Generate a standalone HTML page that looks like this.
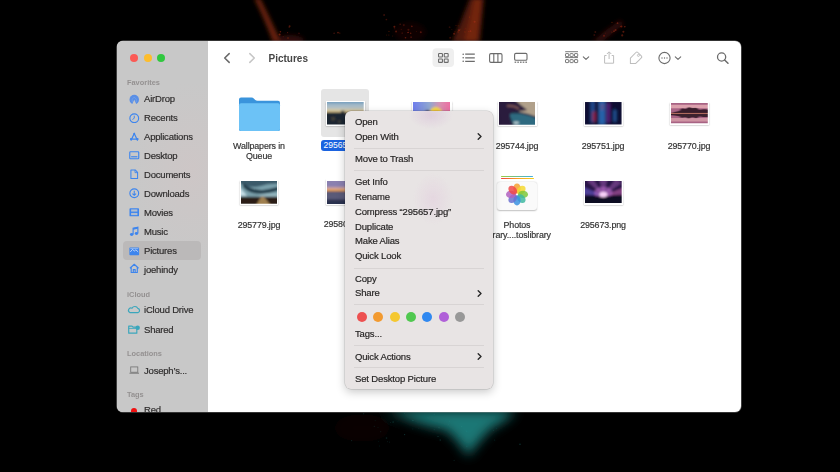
<!DOCTYPE html>
<html><head><meta charset="utf-8">
<style>
*{box-sizing:border-box;margin:0;padding:0}
html,body{width:840px;height:472px;overflow:hidden;background:#000}
.lbl,.si,.mi,.sh{will-change:transform;-webkit-text-stroke:0.18px currentColor}
.sh{-webkit-text-stroke:0}
body{position:relative;font-family:"Liberation Sans",sans-serif;color:#2b2b2b}
.abs{position:absolute}
#win{position:absolute;left:117px;top:41px;width:624px;height:371px;border-radius:6px;overflow:hidden;background:#fff;box-shadow:0 0 0 0.6px rgba(190,190,190,0.55)}
#side{position:absolute;left:0;top:0;width:91px;height:371px;background:radial-gradient(ellipse 60px 90px at 75px 130px,rgba(215,195,195,0.35),rgba(215,195,195,0) 100%),#c8c8c8}
.dot{position:absolute;width:8px;height:8px;border-radius:50%}
.sh{position:absolute;left:10px;font-size:7.4px;font-weight:700;color:#949191;white-space:nowrap}
.si{position:absolute;left:27px;margin-top:0.3px;font-size:9.5px;letter-spacing:-0.2px;color:#2e2c2c;white-space:nowrap}
.ic{position:absolute;left:12px}
.lbl{position:absolute;font-size:8.6px;color:#333;white-space:nowrap;text-align:center;line-height:10.5px}
.th{position:absolute;background:#fff;box-shadow:0 0.5px 1.5px rgba(0,0,0,.35)}
.th i{position:absolute;left:2px;top:2px;right:2px;bottom:2px;display:block}
#menu{position:absolute;left:345px;top:110.5px;width:147.5px;height:278.5px;border-radius:6px;background:radial-gradient(ellipse 22px 14px at 86px 4px,rgba(215,190,215,0.55),rgba(215,190,215,0)),radial-gradient(ellipse 20px 26px at 88px 88px,rgba(225,200,220,0.45),rgba(225,200,220,0)),#e8e4e4;box-shadow:0 0 0 0.5px rgba(0,0,0,.18),0 3px 10px rgba(0,0,0,.22)}
.mi{position:absolute;left:10px;margin-top:-0.4px;font-size:9.5px;letter-spacing:-0.15px;color:#262424;white-space:nowrap}
.sep{position:absolute;left:9px;right:9px;height:1px;background:#d8d4d4}
.chev{position:absolute;left:132px}
.cd{position:absolute;width:10px;height:10px;border-radius:50%;top:201px}
</style></head><body>
<!-- background glows -->
<svg class="abs" style="left:0;top:0" width="840" height="472" viewBox="0 0 840 472">
<defs>
<filter id="b3" x="-50%" y="-50%" width="200%" height="200%"><feGaussianBlur stdDeviation="2.2"/></filter>
<filter id="b6" x="-50%" y="-50%" width="200%" height="200%"><feGaussianBlur stdDeviation="6"/></filter>
<filter id="b1" x="-50%" y="-50%" width="200%" height="200%"><feGaussianBlur stdDeviation="0.6"/></filter>
</defs>
<g filter="url(#b3)">
<path d="M254 -2 Q264 18 273 42 L281 42 Q270 18 260 -2 Z" fill="#8c2c16" opacity="0.75"/>
<ellipse cx="290" cy="40" rx="14" ry="5" fill="#5a1410" opacity="0.5"/>
<path d="M470 -2 L484 -2 Q482 20 480 42 L452 42 Q462 20 470 -2 Z" fill="#6a2010" opacity="0.75"/><path d="M474 -2 L482 -2 Q480 20 477 42 L464 42 Q470 20 474 -2 Z" fill="#8c2c14" opacity="0.6"/>
<ellipse cx="410" cy="32" rx="16" ry="10" fill="#3a1208" opacity="0.25"/>
<path d="M592 42 Q605 30 620 20 L624 24 Q612 34 602 42 Z" fill="#5a1410" opacity="0.5"/>
</g>
<g filter="url(#b6)">
<path d="M386 410 L516 410 Q506 422 492 428 Q480 440 468 456 Q458 440 446 430 Q420 426 386 410 Z" fill="#1c8482" opacity="0.9"/>
<ellipse cx="362" cy="428" rx="28" ry="14" fill="#140a0c" opacity="0.35"/>
</g>
<g fill="#b0301a" filter="url(#b1)"><circle cx="402.2" cy="33.1" r="0.89" opacity="0.23"/><circle cx="394.8" cy="28.7" r="0.53" opacity="0.38"/><circle cx="416.4" cy="31.5" r="0.54" opacity="0.24"/><circle cx="386.7" cy="35.1" r="0.57" opacity="0.28"/><circle cx="386.4" cy="19.5" r="0.85" opacity="0.34"/><circle cx="408.4" cy="29.7" r="1.02" opacity="0.31"/><circle cx="408.4" cy="32.4" r="0.69" opacity="0.48"/><circle cx="411.1" cy="37.2" r="0.88" opacity="0.33"/><circle cx="401.2" cy="29.4" r="0.54" opacity="0.28"/><circle cx="400.1" cy="24.3" r="0.69" opacity="0.40"/><circle cx="396.1" cy="31.5" r="0.98" opacity="0.44"/><circle cx="405.5" cy="37.8" r="0.82" opacity="0.50"/><circle cx="403.8" cy="25.1" r="1.09" opacity="0.25"/><circle cx="388.9" cy="35.0" r="0.59" opacity="0.37"/><circle cx="420.8" cy="32.2" r="0.96" opacity="0.40"/><circle cx="411.8" cy="26.3" r="0.92" opacity="0.41"/><circle cx="394.4" cy="26.8" r="1.00" opacity="0.52"/><circle cx="389.0" cy="31.4" r="0.54" opacity="0.44"/><circle cx="384.1" cy="14.9" r="0.99" opacity="0.31"/><circle cx="392.7" cy="35.9" r="0.51" opacity="0.36"/><circle cx="407.7" cy="32.6" r="0.54" opacity="0.46"/><circle cx="410.7" cy="33.3" r="0.73" opacity="0.50"/><circle cx="470.6" cy="31.2" r="0.83" opacity="0.50"/><circle cx="469.6" cy="17.1" r="0.67" opacity="0.35"/><circle cx="450.2" cy="37.7" r="1.07" opacity="0.26"/><circle cx="464.9" cy="31.9" r="0.64" opacity="0.37"/><circle cx="456.0" cy="25.5" r="0.50" opacity="0.35"/><circle cx="454.1" cy="33.7" r="1.07" opacity="0.44"/><circle cx="449.6" cy="27.2" r="0.91" opacity="0.23"/><circle cx="474.6" cy="21.8" r="1.02" opacity="0.47"/><circle cx="454.9" cy="31.8" r="0.56" opacity="0.42"/><circle cx="465.1" cy="28.9" r="0.63" opacity="0.26"/><circle cx="460.4" cy="29.7" r="0.50" opacity="0.26"/><circle cx="468.9" cy="31.4" r="0.52" opacity="0.50"/><circle cx="458.2" cy="25.8" r="0.65" opacity="0.32"/><circle cx="459.0" cy="30.3" r="1.01" opacity="0.54"/><circle cx="451.9" cy="29.5" r="0.55" opacity="0.25"/><circle cx="458.1" cy="31.9" r="1.00" opacity="0.26"/><circle cx="299.0" cy="33.4" r="0.82" opacity="0.26"/><circle cx="280.4" cy="31.7" r="0.82" opacity="0.53"/><circle cx="289.1" cy="27.3" r="0.66" opacity="0.33"/><circle cx="288.0" cy="38.0" r="0.82" opacity="0.47"/><circle cx="279.6" cy="34.5" r="0.99" opacity="0.53"/><circle cx="289.6" cy="26.2" r="0.99" opacity="0.46"/><circle cx="283.2" cy="36.8" r="0.71" opacity="0.22"/><circle cx="287.6" cy="32.6" r="0.66" opacity="0.44"/><circle cx="621.4" cy="26.5" r="1.06" opacity="0.53"/><circle cx="620.2" cy="26.7" r="0.63" opacity="0.28"/><circle cx="614.0" cy="31.2" r="0.87" opacity="0.51"/><circle cx="617.5" cy="23.2" r="0.89" opacity="0.47"/><circle cx="623.4" cy="31.7" r="1.05" opacity="0.47"/><circle cx="612.0" cy="22.3" r="0.61" opacity="0.47"/><circle cx="604.0" cy="35.8" r="1.08" opacity="0.34"/><circle cx="594.3" cy="35.0" r="0.93" opacity="0.26"/><circle cx="615.6" cy="30.0" r="1.04" opacity="0.47"/><circle cx="622.2" cy="35.4" r="1.09" opacity="0.43"/><circle cx="605.3" cy="33.1" r="0.58" opacity="0.22"/><circle cx="624.8" cy="26.7" r="0.82" opacity="0.52"/><circle cx="595.3" cy="32.1" r="1.00" opacity="0.28"/><circle cx="611.9" cy="32.2" r="0.64" opacity="0.40"/><circle cx="339.8" cy="33.1" r="0.58" opacity="0.51"/><circle cx="338.0" cy="32.6" r="0.85" opacity="0.51"/><circle cx="334.1" cy="33.2" r="0.80" opacity="0.38"/></g>
<g fill="#2a8a88" filter="url(#b1)"><circle cx="434.2" cy="429.6" r="0.62" opacity="0.16"/><circle cx="493.7" cy="430.6" r="0.49" opacity="0.23"/><circle cx="434.1" cy="414.3" r="0.56" opacity="0.25"/><circle cx="390.6" cy="422.5" r="0.45" opacity="0.25"/><circle cx="440.2" cy="440.1" r="0.79" opacity="0.24"/><circle cx="393.1" cy="422.0" r="0.86" opacity="0.23"/><circle cx="412.9" cy="420.4" r="0.66" opacity="0.29"/><circle cx="404.6" cy="434.6" r="0.64" opacity="0.35"/><circle cx="461.7" cy="426.6" r="0.68" opacity="0.35"/><circle cx="448.7" cy="424.3" r="0.46" opacity="0.23"/><circle cx="460.0" cy="434.1" r="0.44" opacity="0.28"/><circle cx="466.9" cy="446.4" r="0.73" opacity="0.16"/><circle cx="454.1" cy="460.3" r="0.60" opacity="0.23"/><circle cx="496.6" cy="428.5" r="0.48" opacity="0.22"/><circle cx="412.8" cy="428.9" r="0.50" opacity="0.20"/><circle cx="439.0" cy="427.6" r="0.68" opacity="0.23"/><circle cx="466.8" cy="431.3" r="0.71" opacity="0.24"/><circle cx="520.0" cy="444.2" r="0.79" opacity="0.35"/><circle cx="458.6" cy="436.0" r="0.42" opacity="0.31"/><circle cx="438.0" cy="436.5" r="0.61" opacity="0.34"/><circle cx="449.7" cy="421.2" r="0.47" opacity="0.34"/><circle cx="397.9" cy="421.7" r="0.44" opacity="0.13"/><circle cx="428.0" cy="417.8" r="0.44" opacity="0.35"/><circle cx="404.2" cy="413.2" r="0.44" opacity="0.32"/><circle cx="494.6" cy="440.1" r="0.63" opacity="0.20"/><circle cx="375.2" cy="420.6" r="0.53" opacity="0.15"/><circle cx="418.2" cy="428.4" r="0.45" opacity="0.16"/><circle cx="389.6" cy="442.1" r="0.56" opacity="0.19"/><circle cx="380.7" cy="431.7" r="0.65" opacity="0.16"/><circle cx="378.4" cy="441.6" r="0.53" opacity="0.13"/><circle cx="378.0" cy="427.4" r="0.49" opacity="0.23"/><circle cx="386.5" cy="438.1" r="0.81" opacity="0.22"/><circle cx="351.6" cy="440.6" r="0.60" opacity="0.24"/><circle cx="363.7" cy="413.7" r="0.57" opacity="0.32"/><circle cx="374.3" cy="426.3" r="0.60" opacity="0.20"/><circle cx="387.5" cy="441.8" r="0.44" opacity="0.30"/><circle cx="379.7" cy="446.0" r="0.44" opacity="0.32"/></g>
</svg>


<div id="win">
  <div id="side">
    <div class="dot" style="left:13.1px;top:13.3px;background:#fb5a55"></div>
    <div class="dot" style="left:26.9px;top:13.3px;background:#fdbd2c"></div>
    <div class="dot" style="left:40.4px;top:13.3px;background:#30c83f"></div>
<div class="abs" style="left:6px;top:200px;width:78px;height:18.5px;border-radius:4px;background:#bbb9b9"></div>
<div class="si" style="top:53.0px;line-height:9.2px">AirDrop</div><svg class="ic" style="top:52.75px;left:12.1px" width="10.5" height="10.5" viewBox="0 0 11 11"><circle cx="5.5" cy="5.9" r="5" fill="#5a8fe6"/><path d="M5.5 6 L3.2 11 H7.8 Z" fill="#c8c8c8"/><path d="M3.4 8.6 Q2.2 5 5.5 3.2 Q8.8 5 7.6 8.6" fill="none" stroke="#7aa6ec" stroke-width="0.7"/></svg>
<div class="si" style="top:71.8px;line-height:9.2px">Recents</div><svg class="ic" style="top:71.55px;left:12.1px" width="10.5" height="10.5" viewBox="0 0 11 11"><circle cx="5.5" cy="5.5" r="4.6" fill="none" stroke="#3d85ee" stroke-width="1.2"/><path d="M5.5 2.8 V5.5 L3.6 6.8" fill="none" stroke="#3d85ee" stroke-width="1"/></svg>
<div class="si" style="top:90.7px;line-height:9.2px">Applications</div><svg class="ic" style="top:90.45px;left:12.1px" width="10.5" height="10.5" viewBox="0 0 11 11"><path d="M5.5 2.6 L2.2 9.6 M5.5 2.6 L8.8 9.6 M1.6 8.4 H9.4" fill="none" stroke="#3d85ee" stroke-width="1.3" stroke-linecap="round"/><circle cx="5.5" cy="2.8" r="1" fill="#3d85ee"/><circle cx="2.2" cy="8.5" r="1.1" fill="#3d85ee"/><circle cx="8.8" cy="8.5" r="1.1" fill="#3d85ee"/></svg>
<div class="si" style="top:109.4px;line-height:9.2px">Desktop</div><svg class="ic" style="top:109.15px;left:12.1px" width="10.5" height="10.5" viewBox="0 0 11 11"><rect x="0.8" y="1.8" width="9.4" height="7.4" rx="0.8" fill="none" stroke="#3d85ee" stroke-width="1.2"/><rect x="2.2" y="6.5" width="6.6" height="1.2" fill="#3d85ee"/></svg>
<div class="si" style="top:128.4px;line-height:9.2px">Documents</div><svg class="ic" style="top:128.15px;left:12.1px" width="10.5" height="10.5" viewBox="0 0 11 11"><path d="M2 1 H6.5 L9 3.5 V10 H2 Z" fill="none" stroke="#3d85ee" stroke-width="1.1" stroke-linejoin="round"/><path d="M6.3 1 V3.8 H9" fill="none" stroke="#3d85ee" stroke-width="0.9"/></svg>
<div class="si" style="top:147.4px;line-height:9.2px">Downloads</div><svg class="ic" style="top:147.15px;left:12.1px" width="10.5" height="10.5" viewBox="0 0 11 11"><circle cx="5.5" cy="5.5" r="4.6" fill="none" stroke="#3d85ee" stroke-width="1.2"/><path d="M5.5 3 V7.6 M3.6 5.8 L5.5 7.7 L7.4 5.8" fill="none" stroke="#3d85ee" stroke-width="1.1"/></svg>
<div class="si" style="top:166.4px;line-height:9.2px">Movies</div><svg class="ic" style="top:166.15px;left:12.1px" width="10.5" height="10.5" viewBox="0 0 11 11"><rect x="0.5" y="1.2" width="10" height="8.6" rx="0.9" fill="#3d85ee"/><rect x="2.2" y="2.5" width="6.6" height="2.3" fill="#c8c8c8" opacity="0.85"/><rect x="2.2" y="6.2" width="6.6" height="2.3" fill="#c8c8c8" opacity="0.85"/></svg>
<div class="si" style="top:185.4px;line-height:9.2px">Music</div><svg class="ic" style="top:185.15px;left:12.1px" width="10.5" height="10.5" viewBox="0 0 11 11"><path d="M4.3 8.8 V2.2 L9.3 1.2 V7.6" fill="none" stroke="#3d85ee" stroke-width="1.2"/><path d="M4.3 2.2 L9.3 1.2 V3 L4.3 4 Z" fill="#3d85ee"/><ellipse cx="2.8" cy="8.9" rx="1.8" ry="1.5" fill="#3d85ee"/><ellipse cx="7.8" cy="7.8" rx="1.8" ry="1.5" fill="#3d85ee"/></svg>
<div class="si" style="top:205.0px;line-height:9.2px">Pictures</div><svg class="ic" style="top:204.75px;left:12.1px" width="10.5" height="10.5" viewBox="0 0 11 11"><rect x="0.4" y="1.5" width="10.2" height="8.2" rx="0.7" fill="#3d85ee"/><path d="M1.4 6.2 L3.6 3.6 L5.6 5.2 L7.2 4 L9.6 6.2" fill="none" stroke="#dfe8f8" stroke-width="0.8"/><rect x="1.3" y="2.4" width="8.4" height="0.8" fill="#dfe8f8" opacity="0.6"/></svg>
<div class="si" style="top:224.0px;line-height:9.2px">joehindy</div><svg class="ic" style="top:222.00px;left:12.1px" width="10.5" height="10.5" viewBox="0 0 11 11"><path d="M1 5.5 L5.5 1.3 L10 5.5 M2.3 4.5 V10 H8.7 V4.5 M4.5 10 V7 H6.5 V10" fill="none" stroke="#3d85ee" stroke-width="1.2" stroke-linejoin="round"/></svg>
<div class="si" style="top:264.2px;line-height:9.2px">iCloud Drive</div><svg class="ic" style="top:263.45px;left:12.1px;overflow:visible" width="10.5" height="10.5" viewBox="0 0 11 11"><path d="M0.9 9 H9.6 A2.3 2.3 0 0 0 9.2 4.6 A3.3 3.3 0 0 0 3.2 4.4 A2.4 2.4 0 0 0 0.9 9 Z" fill="none" stroke="#3aa6bc" stroke-width="1.2" stroke-linejoin="round"/></svg>
<div class="si" style="top:283.4px;line-height:9.2px">Shared</div><svg class="ic" style="top:282.65px;left:12.1px;overflow:visible" width="10.5" height="10.5" viewBox="0 0 11 11"><path d="M-0.3 2.2 H3.2 L4.2 3.2 H8.2 V9.6 H-0.3 Z" fill="none" stroke="#3aa6bc" stroke-width="1.2" stroke-linejoin="round"/><path d="M-0.3 4.6 H8.2" stroke="#3aa6bc" stroke-width="0.9"/><circle cx="9.1" cy="3.9" r="2.3" fill="#3aa6bc"/></svg>
<div class="si" style="top:324.6px;line-height:9.2px">Joseph’s...</div><svg class="ic" style="top:323.85px;left:12.1px" width="10.5" height="10.5" viewBox="0 0 11 11"><rect x="1.8" y="2" width="7.4" height="5.6" fill="none" stroke="#777" stroke-width="0.9"/><path d="M0.5 8.6 H10.5" stroke="#777" stroke-width="1"/></svg>
<div class="sh" style="top:37.8px;line-height:7.4px">Favorites</div>
<div class="sh" style="top:249.9px;line-height:7.4px">iCloud</div>
<div class="sh" style="top:309.4px;line-height:7.4px">Locations</div>
<div class="sh" style="top:350.3px;line-height:7.4px">Tags</div>
<div class="abs" style="left:13.8px;top:366.5px;width:6.4px;height:6.4px;border-radius:50%;background:#f01010"></div><div class="si" style="top:364.2px;line-height:9.2px">Red</div>
  </div>
</div>

<svg class="abs" style="left:238px;top:96px" width="43" height="36" viewBox="0 0 43 36">
<path d="M1 3.6 Q1 1.6 3 1.6 H13.5 Q15 1.6 16 2.7 L17.3 4.1 Q18 4.8 19.5 4.8 H40 Q42 4.8 42 6.8 V33 Q42 35 40 35 H3 Q1 35 1 33 Z" fill="#3a94dc"/>
<path d="M1 9.2 Q1 7.2 3 7.2 H40 Q42 7.2 42 9.2 V33 Q42 35 40 35 H3 Q1 35 1 33 Z" fill="#6cc2f6"/>
<path d="M1 33 Q1 35 3 35 H40 Q42 35 42 33 V33.8 Q42 35 40 35 H3 Q1 35 1 33.8 Z" fill="#4aa2e0"/>
</svg>
<div class="lbl" style="left:209px;width:100px;top:141.6px;font-size:8.9px;line-height:8.9px;letter-spacing:-0.12px;color:#333">Wallpapers in</div>
<div class="lbl" style="left:209px;width:100px;top:152.2px;font-size:8.9px;line-height:8.9px;letter-spacing:-0.12px;color:#333">Queue</div>
<div class="abs" style="left:320.8px;top:89px;width:48.5px;height:48px;border-radius:3px;background:#e5e5e5"></div>
<div class="th" style="left:325.6px;top:100.6px;width:39.5px;height:25.4px"><svg style="position:absolute;left:1.4px;top:1.4px" width="36.7" height="22.6" viewBox="0 0 36 23" preserveAspectRatio="none"><defs><filter id="f327102" x="-20%" y="-20%" width="140%" height="140%"><feGaussianBlur stdDeviation="0.9"/></filter><clipPath id="c327102"><rect width="36" height="23"/></clipPath></defs><g clip-path="url(#c327102)"><g filter="url(#f327102)"><rect x="-2" y="-2" width="40" height="27" fill="#1c222c"/><rect x="-2" y="-2" width="40" height="9" fill="#7aa2c0"/><rect x="-2" y="2" width="40" height="5" fill="#a8bcc8"/><rect x="-2" y="6" width="40" height="3" fill="#c8c8b8"/><rect x="-2" y="8.5" width="40" height="2.2" fill="#dcc48a"/><path d="M-2 11 H14 V9 H17 V12 H40 V25 H-2 Z" fill="#1e2630"/><circle cx="6" cy="17" r="2" fill="#5a5040" opacity="0.6"/><circle cx="12" cy="20" r="1.5" fill="#605848" opacity="0.5"/></g></g></svg></div>
<div class="abs" style="left:321px;top:140px;width:49px;height:11px;border-radius:3px;background:#1b63e0"></div>
<div class="abs" style="left:323.5px;top:141.3px;font-size:8.6px;line-height:8.6px;color:#fff;white-space:nowrap">295657.jpg</div>
<div class="th" style="left:411.5px;top:100.5px;width:40.1px;height:25.5px"><svg style="position:absolute;left:1.4px;top:1.4px" width="37.3" height="22.7" viewBox="0 0 36 23" preserveAspectRatio="none"><defs><filter id="f412101" x="-20%" y="-20%" width="140%" height="140%"><feGaussianBlur stdDeviation="0.9"/></filter><clipPath id="c412101"><rect width="36" height="23"/></clipPath></defs><g clip-path="url(#c412101)"><g filter="url(#f412101)"><defs><linearGradient id="sg" x1="0" x2="1"><stop offset="0" stop-color="#6a78f0"/><stop offset="0.45" stop-color="#90a8d0"/><stop offset="0.7" stop-color="#d890b0"/><stop offset="1" stop-color="#f068a0"/></linearGradient></defs><rect x="-2" y="-2" width="40" height="27" fill="url(#sg)"/><circle cx="22" cy="11" r="6" fill="#f8d840"/><circle cx="22" cy="14" r="5" fill="#f0a040"/><path d="M10 12 Q13 6 17 10 L17 14 H10 Z" fill="#3a1a40"/></g></g></svg></div>
<div class="th" style="left:497.6px;top:100.5px;width:39.1px;height:25.5px"><svg style="position:absolute;left:1.4px;top:1.4px" width="36.3" height="22.7" viewBox="0 0 36 23" preserveAspectRatio="none"><defs><filter id="f499101" x="-20%" y="-20%" width="140%" height="140%"><feGaussianBlur stdDeviation="0.9"/></filter><clipPath id="c499101"><rect width="36" height="23"/></clipPath></defs><g clip-path="url(#c499101)"><g filter="url(#f499101)"><rect x="-2" y="-2" width="40" height="27" fill="#24304a"/><path d="M14 -2 H40 V16 Q30 12 20 10 Z" fill="#b0a08a"/><path d="M10 12 Q20 11 30 14 L40 18 V25 H16 Q12 18 10 12 Z" fill="#2e6a80"/><path d="M-2 -2 H16 Q22 4 28 8 Q20 9 12 11 Q8 16 14 25 H-2 Z" fill="#2a1a3c"/><path d="M8 4 Q14 3 20 7" stroke="#a07060" stroke-width="2" fill="none" opacity="0.7"/><ellipse cx="17" cy="21" rx="3" ry="1.3" fill="#e0e8e8" opacity="0.8"/></g></g></svg></div>
<div class="lbl" style="left:467px;width:100px;top:141.6px;font-size:8.9px;line-height:8.9px;letter-spacing:-0.12px;color:#333">295744.jpg</div>
<div class="th" style="left:583.6px;top:100.6px;width:39.4px;height:25.4px"><svg style="position:absolute;left:1.4px;top:1.4px" width="36.6" height="22.6" viewBox="0 0 36 23" preserveAspectRatio="none"><defs><filter id="f585102" x="-20%" y="-20%" width="140%" height="140%"><feGaussianBlur stdDeviation="1.4"/></filter><clipPath id="c585102"><rect width="36" height="23"/></clipPath></defs><g clip-path="url(#c585102)"><g filter="url(#f585102)"><rect x="-2" y="-2" width="40" height="27" fill="#0c0c32"/><rect x="5.5" y="-1" width="4" height="22" fill="#2a60b0" opacity="0.75"/><rect x="7.5" y="10" width="3" height="10" fill="#a02040" opacity="0.9"/><rect x="13.5" y="-1" width="6.5" height="24" fill="#2f78c8" opacity="0.8"/><rect x="21" y="1" width="3.5" height="20" fill="#6a2a90" opacity="0.75"/><rect x="28" y="8" width="2.5" height="12" fill="#2a6ab8" opacity="0.8"/><rect x="16" y="2" width="2" height="6" fill="#a04060" opacity="0.6"/></g></g></svg></div>
<div class="lbl" style="left:553px;width:100px;top:141.6px;font-size:8.9px;line-height:8.9px;letter-spacing:-0.12px;color:#333">295751.jpg</div>
<div class="th" style="left:669.8px;top:101.9px;width:39.6px;height:23.1px"><svg style="position:absolute;left:1.4px;top:1.4px" width="36.8" height="20.3" viewBox="0 0 36 23" preserveAspectRatio="none"><defs><filter id="f671103" x="-20%" y="-20%" width="140%" height="140%"><feGaussianBlur stdDeviation="0.8"/></filter><clipPath id="c671103"><rect width="36" height="23"/></clipPath></defs><g clip-path="url(#c671103)"><g filter="url(#f671103)"><rect x="-2" y="-2" width="40" height="27" fill="#a86484"/><rect x="-2" y="2" width="40" height="4" fill="#e8b0b8" opacity="0.8"/><rect x="-2" y="17" width="40" height="4" fill="#e0a8b0" opacity="0.7"/><path d="M-2 12 Q4 10 8 9 Q10 4 14 7 Q17 3 21 6 Q25 4 28 8 Q33 6 40 9 V12 H-2 Z" fill="#2a1420" opacity="0.9"/><rect x="-2" y="11.2" width="40" height="1.2" fill="#e08860" opacity="0.6"/><path d="M-2 12.4 H40 V15 Q33 17 28 15 Q25 19 21 16 Q17 19 14 16 Q10 18 8 15 Q4 14 -2 13.5 Z" fill="#2a1420" opacity="0.85"/></g></g></svg></div>
<div class="lbl" style="left:639px;width:100px;top:141.6px;font-size:8.9px;line-height:8.9px;letter-spacing:-0.12px;color:#333">295770.jpg</div>
<div class="th" style="left:239.6px;top:179.5px;width:38.8px;height:25.5px"><svg style="position:absolute;left:1.4px;top:1.4px" width="36.0" height="22.7" viewBox="0 0 36 23" preserveAspectRatio="none"><defs><filter id="f241180" x="-20%" y="-20%" width="140%" height="140%"><feGaussianBlur stdDeviation="0.9"/></filter><clipPath id="c241180"><rect width="36" height="23"/></clipPath></defs><g clip-path="url(#c241180)"><g filter="url(#f241180)"><rect x="-2" y="-2" width="40" height="27" fill="#7aa0ac"/><path d="M-2 -2 H40 V3 Q28 2 20 5 Q10 8 -2 2 Z" fill="#3a5a6a"/><path d="M2 2 Q12 10 22 9 Q30 8 40 5 V9 Q30 12 20 13 Q8 13 2 6 Z" fill="#243c4c"/><path d="M-2 6 Q2 10 6 15 H-2 Z" fill="#c8e0e8"/><path d="M20 14 Q28 12 40 13 V16 H16 Z" fill="#a0c0c8" opacity="0.8"/><rect x="-2" y="16" width="40" height="9" fill="#2a1c18"/><path d="M15 25 L20 16 L23 16 L30 25 Z" fill="#a08050"/></g></g></svg></div>
<div class="lbl" style="left:209px;width:100px;top:220.7px;font-size:8.9px;line-height:8.9px;letter-spacing:-0.12px;color:#333">295779.jpg</div>
<div class="th" style="left:325.7px;top:179.3px;width:39.4px;height:25.8px"><svg style="position:absolute;left:1.4px;top:1.4px" width="36.6" height="23.0" viewBox="0 0 36 23" preserveAspectRatio="none"><defs><filter id="f327180" x="-20%" y="-20%" width="140%" height="140%"><feGaussianBlur stdDeviation="0.9"/></filter><clipPath id="c327180"><rect width="36" height="23"/></clipPath></defs><g clip-path="url(#c327180)"><g filter="url(#f327180)"><rect x="-2" y="-2" width="40" height="27" fill="#2a3050"/><rect x="-2" y="-2" width="40" height="8" fill="#8a80b0"/><rect x="-2" y="6" width="40" height="3" fill="#c8a0a0"/><rect x="-2" y="8.5" width="40" height="2" fill="#f0a040"/><rect x="-2" y="10.5" width="40" height="8" fill="#5a5a78"/><path d="M22 12 Q26 7 32 8 L40 10 V14 H22 Z" fill="#1a1a2a"/></g></g></svg></div>
<div class="lbl" style="left:295px;width:100px;top:220.2px;font-size:8.9px;line-height:8.9px;letter-spacing:-0.12px;color:#333">295808.jpg</div>
<div class="abs" style="left:501px;top:175.6px;width:31.5px;height:1.3px;border-radius:1px;background:linear-gradient(90deg,#9ccc40,#40b0e0)"></div>
<div class="abs" style="left:500.5px;top:178.2px;width:33.5px;height:1.3px;border-radius:1px;background:linear-gradient(90deg,#f04040,#f8a020,#f0d020)"></div>
<div class="abs" style="left:497px;top:181.5px;width:40px;height:28px;border-radius:3px;background:#fafafa;box-shadow:0 0.5px 1.5px rgba(0,0,0,.25)"></div>
<svg class="abs" style="left:497px;top:181px" width="40" height="30" viewBox="0 0 40 30"><ellipse cx="20.00" cy="7.40" rx="3.6" ry="5" transform="rotate(0 20.00 7.40)" fill="#f5a030" fill-opacity="0.85"/><ellipse cx="24.24" cy="9.16" rx="3.6" ry="5" transform="rotate(45 24.24 9.16)" fill="#f5d830" fill-opacity="0.85"/><ellipse cx="26.00" cy="13.40" rx="3.6" ry="5" transform="rotate(90 26.00 13.40)" fill="#7cc83c" fill-opacity="0.85"/><ellipse cx="24.24" cy="17.64" rx="3.6" ry="5" transform="rotate(135 24.24 17.64)" fill="#40b8a0" fill-opacity="0.85"/><ellipse cx="20.00" cy="19.40" rx="3.6" ry="5" transform="rotate(180 20.00 19.40)" fill="#3a90e0" fill-opacity="0.85"/><ellipse cx="15.76" cy="17.64" rx="3.6" ry="5" transform="rotate(225 15.76 17.64)" fill="#6a70d0" fill-opacity="0.85"/><ellipse cx="14.00" cy="13.40" rx="3.6" ry="5" transform="rotate(270 14.00 13.40)" fill="#b060c0" fill-opacity="0.85"/><ellipse cx="15.76" cy="9.16" rx="3.6" ry="5" transform="rotate(315 15.76 9.16)" fill="#f04848" fill-opacity="0.85"/></svg>
<div class="lbl" style="left:467px;width:100px;top:220.5px;font-size:8.9px;line-height:8.9px;letter-spacing:-0.12px;color:#333">Photos</div>
<div class="lbl" style="left:465.8px;width:100px;top:231.3px;font-size:8.9px;line-height:8.9px;letter-spacing:-0.12px;color:#333">Library....toslibrary</div>
<div class="th" style="left:583.6px;top:179.6px;width:39.5px;height:25.1px"><svg style="position:absolute;left:1.4px;top:1.4px" width="36.7" height="22.3" viewBox="0 0 36 23" preserveAspectRatio="none"><defs><filter id="f585181" x="-20%" y="-20%" width="140%" height="140%"><feGaussianBlur stdDeviation="0.9"/></filter><clipPath id="c585181"><rect width="36" height="23"/></clipPath></defs><g clip-path="url(#c585181)"><g filter="url(#f585181)"><rect x="-2" y="-2" width="40" height="27" fill="#2a1848"/><path d="M18 15 L-2 6 L-2 14 Z" fill="#6a5ad0" opacity="0.6"/><path d="M18 15 L2 0 L8 -2 Z M18 15 L14 -2 L22 -2 Z M18 15 L30 -2 L36 2 Z" fill="#b060c0" opacity="0.45"/><path d="M18 15 L40 6 L40 14 Z" fill="#c05aa8" opacity="0.6"/><ellipse cx="18" cy="12" rx="9" ry="6" fill="#c070d0" opacity="0.6"/><ellipse cx="18" cy="14" rx="4" ry="3" fill="#f8d0f8"/><path d="M-2 16 Q10 14 18 17 Q26 14 40 15 V25 H-2 Z" fill="#101020"/></g></g></svg></div>
<div class="lbl" style="left:553px;width:100px;top:220.9px;font-size:8.9px;line-height:8.9px;letter-spacing:-0.12px;color:#333">295673.png</div>
<svg class="abs" style="left:0;top:0" width="840" height="90" viewBox="0 0 840 90">
<path d="M229.2 53.6 L224.7 58 L229.2 62.4" fill="none" stroke="#686868" stroke-width="1.5" stroke-linecap="round" stroke-linejoin="round"/>
<path d="M249.8 53.6 L254.3 58 L249.8 62.4" fill="none" stroke="#c6c6c6" stroke-width="1.5" stroke-linecap="round" stroke-linejoin="round"/>
<rect x="432.5" y="48.3" width="21.5" height="18.6" rx="4" fill="#efefef"/>
<g fill="none" stroke="#6b6b6b" stroke-width="1.1">
<rect x="438.55" y="53.55" width="3.9" height="3.4" rx="0.7"/><rect x="444.25" y="53.55" width="3.9" height="3.4" rx="0.7"/>
<rect x="438.55" y="58.95" width="3.9" height="3.4" rx="0.7"/><rect x="444.25" y="58.95" width="3.9" height="3.4" rx="0.7"/>
<path d="M465.2 54.2 H474.8 M465.2 57.8 H474.8 M465.2 61.3 H474.8" stroke-width="1.25"/>
<rect x="489.6" y="53.6" width="12.4" height="8.8" rx="1.3"/>
<path d="M493.8 53.8 V62.2 M497.9 53.8 V62.2"/>
<rect x="514.6" y="53.4" width="12.4" height="6.8" rx="1.3"/>
</g>
<g fill="#6b6b6b"><circle cx="463.2" cy="54.2" r="0.8"/><circle cx="463.2" cy="57.8" r="0.8"/><circle cx="463.2" cy="61.3" r="0.8"/>
<rect x="514.6" y="61.6" width="1.6" height="1.2"/><rect x="517.3" y="61.6" width="1.6" height="1.2"/><rect x="520" y="61.6" width="1.6" height="1.2"/><rect x="522.7" y="61.6" width="1.6" height="1.2"/><rect x="525.4" y="61.6" width="1.6" height="1.2"/>
</g>
<g fill="none" stroke="#6b6b6b" stroke-width="0.9">
<path d="M565.2 51.7 H578"/>
<rect x="565.5" y="53.6" width="3.2" height="3" rx="0.5"/><rect x="570" y="53.6" width="3.2" height="3" rx="0.5"/><rect x="574.5" y="53.6" width="3.2" height="3" rx="0.5"/>
<path d="M565.2 57.6 H578"/>
<rect x="565.5" y="59.6" width="3.2" height="3" rx="0.5"/><rect x="570" y="59.6" width="3.2" height="3" rx="0.5"/><rect x="574.5" y="59.6" width="3.2" height="3" rx="0.5"/>
</g>
<path d="M583.3 56.8 L586 59.3 L588.7 56.8" fill="none" stroke="#6b6b6b" stroke-width="1.1" stroke-linecap="round" stroke-linejoin="round"/>
<g fill="none" stroke="#bdbdbd" stroke-width="1">
<path d="M606.5 55.5 H604.6 V63.2 H613.6 V55.5 H611.7"/>
<path d="M609.1 52 V59 M606.9 54 L609.1 51.8 L611.3 54"/>
<g transform="translate(635.2 58.6) rotate(-45)"><path d="M-6.8 0 L-3 -3.8 H4.8 Q6.2 -3.8 6.2 -2.4 V2.4 Q6.2 3.8 4.8 3.8 H-3 Z" stroke-linejoin="round"/></g>
</g>
<circle cx="638.4" cy="55.4" r="1" fill="none" stroke="#bdbdbd" stroke-width="0.9"/>
<circle cx="664.5" cy="58" r="5.6" fill="none" stroke="#6b6b6b" stroke-width="1.1"/>
<g fill="#6b6b6b"><circle cx="662" cy="58" r="0.7"/><circle cx="664.5" cy="58" r="0.7"/><circle cx="667" cy="58" r="0.7"/></g>
<path d="M675.3 56.8 L678 59.3 L680.7 56.8" fill="none" stroke="#6b6b6b" stroke-width="1.1" stroke-linecap="round" stroke-linejoin="round"/>
<circle cx="721.6" cy="57" r="4.1" fill="none" stroke="#6b6b6b" stroke-width="1.3"/>
<path d="M724.6 60 L728 63.3" stroke="#6b6b6b" stroke-width="1.5" stroke-linecap="round"/>
</svg>
<div class="abs" style="left:268.5px;top:53.9px;font-size:10px;line-height:10px;font-weight:700;color:#464646">Pictures</div>
<div id="menu">
<div class="mi" style="top:7.2px;line-height:9.2px">Open</div>
<div class="mi" style="top:22.2px;line-height:9.2px">Open With</div>
<div class="mi" style="top:44.2px;line-height:9.2px">Move to Trash</div>
<div class="mi" style="top:66.7px;line-height:9.2px">Get Info</div>
<div class="mi" style="top:81.4px;line-height:9.2px">Rename</div>
<div class="mi" style="top:96.5px;line-height:9.2px">Compress “295657.jpg”</div>
<div class="mi" style="top:111.4px;line-height:9.2px">Duplicate</div>
<div class="mi" style="top:126.1px;line-height:9.2px">Make Alias</div>
<div class="mi" style="top:141.2px;line-height:9.2px">Quick Look</div>
<div class="mi" style="top:163.7px;line-height:9.2px">Copy</div>
<div class="mi" style="top:178.2px;line-height:9.2px">Share</div>
<div class="mi" style="top:218.8px;line-height:9.2px">Tags...</div>
<div class="mi" style="top:241.4px;line-height:9.2px">Quick Actions</div>
<div class="mi" style="top:263.8px;line-height:9.2px">Set Desktop Picture</div>
<div class="sep" style="top:37.3px"></div>
<div class="sep" style="top:59.3px"></div>
<div class="sep" style="top:157.2px"></div>
<div class="sep" style="top:193.9px"></div>
<div class="sep" style="top:234.9px"></div>
<div class="sep" style="top:256.5px"></div>
<svg class="chev" style="top:22.5px" width="6" height="7" viewBox="0 0 6 7"><path d="M1.2 0.8 L4 3.5 L1.2 6.2" fill="none" stroke="#252525" stroke-width="1.35" stroke-linecap="round" stroke-linejoin="round"/></svg>
<svg class="chev" style="top:179px" width="6" height="7" viewBox="0 0 6 7"><path d="M1.2 0.8 L4 3.5 L1.2 6.2" fill="none" stroke="#252525" stroke-width="1.35" stroke-linecap="round" stroke-linejoin="round"/></svg>
<svg class="chev" style="top:242.2px" width="6" height="7" viewBox="0 0 6 7"><path d="M1.2 0.8 L4 3.5 L1.2 6.2" fill="none" stroke="#252525" stroke-width="1.35" stroke-linecap="round" stroke-linejoin="round"/></svg>
<div class="cd" style="left:12px;background:#ed5050"></div>
<div class="cd" style="left:28.299999999999997px;background:#f29a30"></div>
<div class="cd" style="left:44.6px;background:#f5c830"></div>
<div class="cd" style="left:60.900000000000006px;background:#50c850"></div>
<div class="cd" style="left:77.2px;background:#3088f0"></div>
<div class="cd" style="left:93.5px;background:#b060d8"></div>
<div class="cd" style="left:109.8px;background:#989898"></div>
</div>
</body></html>
